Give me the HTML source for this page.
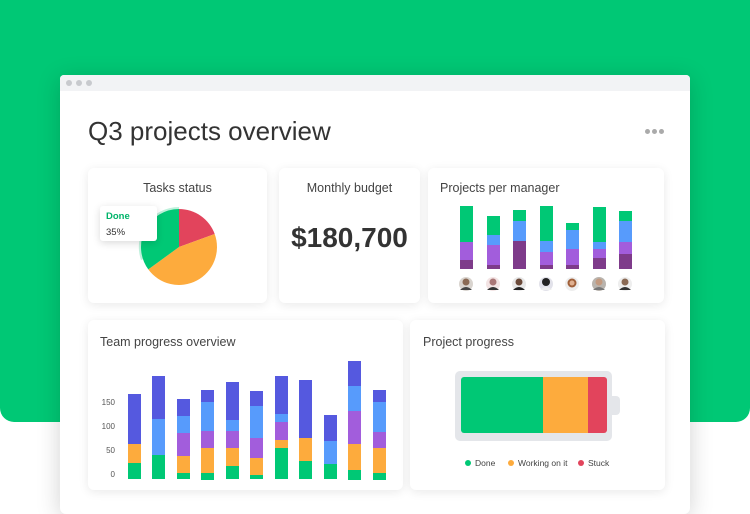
<!DOCTYPE html>
<html><head><meta charset="utf-8"><style>
*{margin:0;padding:0;box-sizing:border-box}
body{width:750px;height:514px;overflow:hidden;background:#fff;font-family:"Liberation Sans",sans-serif;position:relative}
.abs{position:absolute}
.green-bg{left:0;top:0;width:750px;height:422px;background:#00c875;border-radius:0 0 14px 14px}
.win{left:60px;top:75px;width:630px;height:439px;background:#fff;border-radius:4px 4px 6px 6px;box-shadow:0 4px 24px rgba(0,0,0,.18)}
.bar{left:0;top:0;width:630px;height:16px;background:#f2f3f5;border-radius:4px 4px 0 0}
.dot{width:6px;height:6px;border-radius:50%;background:#c8cace;top:5px}
.card{background:#fff;border-radius:6px;box-shadow:0 2px 10px rgba(0,0,0,.09)}
.t{color:#444;font-size:12.5px}
.b{position:absolute;width:13px}
</style></head><body>
<div class="abs green-bg"></div>
<div class="abs win">
 <div class="abs bar"></div>
 <div class="abs dot" style="left:6px"></div><div class="abs dot" style="left:16px"></div><div class="abs dot" style="left:26px"></div>
</div>
<div class="abs" style="left:88px;top:116px;font-size:26px;color:#333">Q3 projects overview</div>
<div class="abs" style="left:645px;top:129px;width:20px;height:5px">
 <span class="abs" style="left:0;width:5px;height:5px;border-radius:50%;background:#aaa"></span>
 <span class="abs" style="left:7px;width:5px;height:5px;border-radius:50%;background:#aaa"></span>
 <span class="abs" style="left:14px;width:5px;height:5px;border-radius:50%;background:#aaa"></span>
</div>

<!-- Tasks status -->
<div class="abs card" style="left:88px;top:168px;width:179px;height:135px"></div>
<div class="abs t" style="left:88px;top:181px;width:179px;text-align:center">Tasks status</div>
<svg class="abs" style="left:130px;top:200px" width="100" height="100" viewBox="0 0 100 100">
 <path d="M49 47 L49 7 A40 40 0 0 0 11 60 Z" fill="#00c875" opacity=".25"/>
 <path d="M49 47 L49 9 A38 38 0 0 1 84.7 34 Z" fill="#e2445c"/>
 <path d="M49 47 L84.7 34 A38 38 0 0 1 18.3 69.4 Z" fill="#fdab3d"/>
 <path d="M49 47 L18.3 69.4 A38 38 0 0 1 49 9 Z" fill="#00c875"/>
</svg>
<div class="abs card" style="left:100px;top:206px;width:57px;height:35px;border-radius:3px;box-shadow:0 2px 8px rgba(0,0,0,.15)">
 <div class="abs" style="left:6px;top:5px;font-size:9.5px;color:#00b46a;font-weight:bold">Done</div>
 <div class="abs" style="left:6px;top:21px;font-size:9.5px;color:#333">35%</div>
</div>

<!-- Monthly budget -->
<div class="abs card" style="left:279px;top:168px;width:141px;height:135px"></div>
<div class="abs t" style="left:279px;top:181px;width:141px;text-align:center">Monthly budget</div>
<div class="abs" style="left:279px;top:222px;width:141px;text-align:center;font-size:28px;font-weight:bold;color:#333">$180,700</div>

<!-- Projects per manager -->
<div class="abs card" style="left:428px;top:168px;width:236px;height:135px"></div>
<div class="abs t" style="left:440px;top:181px">Projects per manager</div>
<div class="abs" style="left:0;top:0">
 <div class="b" style="left:460px;top:206px;height:36px;background:#00c875"></div><div class="b" style="left:460px;top:242px;height:18px;background:#a25ddc"></div><div class="b" style="left:460px;top:260px;height:9px;background:#7e3b8a"></div>
 <div class="b" style="left:487px;top:216px;height:19px;background:#00c875"></div><div class="b" style="left:487px;top:235px;height:10px;background:#579bfc"></div><div class="b" style="left:487px;top:245px;height:20px;background:#a25ddc"></div><div class="b" style="left:487px;top:265px;height:4px;background:#7e3b8a"></div>
 <div class="b" style="left:513px;top:210px;height:11px;background:#00c875"></div><div class="b" style="left:513px;top:221px;height:20px;background:#579bfc"></div><div class="b" style="left:513px;top:241px;height:28px;background:#7e3b8a"></div>
 <div class="b" style="left:540px;top:206px;height:35px;background:#00c875"></div><div class="b" style="left:540px;top:241px;height:11px;background:#579bfc"></div><div class="b" style="left:540px;top:252px;height:13px;background:#a25ddc"></div><div class="b" style="left:540px;top:265px;height:4px;background:#7e3b8a"></div>
 <div class="b" style="left:566px;top:223px;height:7px;background:#00c875"></div><div class="b" style="left:566px;top:230px;height:19px;background:#579bfc"></div><div class="b" style="left:566px;top:249px;height:16px;background:#a25ddc"></div><div class="b" style="left:566px;top:265px;height:4px;background:#7e3b8a"></div>
 <div class="b" style="left:593px;top:207px;height:35px;background:#00c875"></div><div class="b" style="left:593px;top:242px;height:7px;background:#579bfc"></div><div class="b" style="left:593px;top:249px;height:9px;background:#a25ddc"></div><div class="b" style="left:593px;top:258px;height:11px;background:#7e3b8a"></div>
 <div class="b" style="left:619px;top:211px;height:10px;background:#00c875"></div><div class="b" style="left:619px;top:221px;height:21px;background:#579bfc"></div><div class="b" style="left:619px;top:242px;height:12px;background:#a25ddc"></div><div class="b" style="left:619px;top:254px;height:15px;background:#7e3b8a"></div>
</div>
<svg class="abs" style="left:455px;top:276px" width="180" height="18">
 <g>
  <circle cx="11" cy="8" r="7" fill="#d9d4cf"/><circle cx="11" cy="6" r="3.5" fill="#8a6a55"/><path d="M5 14 Q11 8 17 14" fill="#444"/>
  <circle cx="38" cy="8" r="7" fill="#f3e4e4"/><circle cx="38" cy="6" r="3.5" fill="#a77"/><path d="M32 14 Q38 8 44 14" fill="#333"/>
  <circle cx="64" cy="8" r="7" fill="#e8e8e8"/><circle cx="64" cy="6" r="3.5" fill="#6b4a3a"/><path d="M58 14 Q64 8 70 14" fill="#222"/>
  <circle cx="91" cy="8" r="7" fill="#e2e2ea"/><circle cx="91" cy="6" r="4" fill="#222"/><path d="M85 14 Q91 8 97 14" fill="#eee"/>
  <circle cx="117" cy="8" r="7" fill="#eee"/><circle cx="117" cy="7" r="4.5" fill="#a0603a"/><circle cx="117" cy="7" r="2.5" fill="#e0b090"/>
  <circle cx="144" cy="8" r="7" fill="#b9b4ae"/><circle cx="144" cy="6" r="3.5" fill="#c29a80"/><path d="M138 14 Q144 8 150 14" fill="#777"/>
  <circle cx="170" cy="8" r="7" fill="#eee"/><circle cx="170" cy="6" r="3.5" fill="#8a6a55"/><path d="M164 14 Q170 8 176 14" fill="#333"/>
 </g>
</svg>

<!-- Team progress overview -->
<div class="abs card" style="left:88px;top:320px;width:315px;height:170px"></div>
<div class="abs t" style="left:100px;top:335px">Team progress overview</div>
<div class="abs" style="left:98px;top:398px;width:17px;text-align:right;font-size:8px;color:#555">150</div>
<div class="abs" style="left:98px;top:422px;width:17px;text-align:right;font-size:8px;color:#555">100</div>
<div class="abs" style="left:98px;top:446px;width:17px;text-align:right;font-size:8px;color:#555">50</div>
<div class="abs" style="left:98px;top:470px;width:17px;text-align:right;font-size:8px;color:#555">0</div>
<svg class="abs" style="left:0;top:0" width="750" height="514">
<g>
<rect x="128" y="394" width="13" height="50" fill="#5559df"/><rect x="128" y="444" width="13" height="19" fill="#fdab3d"/><rect x="128" y="463" width="13" height="16" fill="#00c875"/>
<rect x="152" y="376" width="13" height="43" fill="#5559df"/><rect x="152" y="419" width="13" height="36" fill="#579bfc"/><rect x="152" y="455" width="13" height="24" fill="#00c875"/>
<rect x="177" y="399" width="13" height="17" fill="#5559df"/><rect x="177" y="416" width="13" height="17" fill="#579bfc"/><rect x="177" y="433" width="13" height="23" fill="#a25ddc"/><rect x="177" y="456" width="13" height="17" fill="#fdab3d"/><rect x="177" y="473" width="13" height="6" fill="#00c875"/>
<rect x="201" y="390" width="13" height="12" fill="#5559df"/><rect x="201" y="402" width="13" height="29" fill="#579bfc"/><rect x="201" y="431" width="13" height="17" fill="#a25ddc"/><rect x="201" y="448" width="13" height="25" fill="#fdab3d"/><rect x="201" y="473" width="13" height="7" fill="#00c875"/>
<rect x="226" y="382" width="13" height="38" fill="#5559df"/><rect x="226" y="420" width="13" height="11" fill="#579bfc"/><rect x="226" y="431" width="13" height="17" fill="#a25ddc"/><rect x="226" y="448" width="13" height="18" fill="#fdab3d"/><rect x="226" y="466" width="13" height="13" fill="#00c875"/>
<rect x="250" y="391" width="13" height="15" fill="#5559df"/><rect x="250" y="406" width="13" height="32" fill="#579bfc"/><rect x="250" y="438" width="13" height="20" fill="#a25ddc"/><rect x="250" y="458" width="13" height="17" fill="#fdab3d"/><rect x="250" y="475" width="13" height="4" fill="#00c875"/>
<rect x="275" y="376" width="13" height="38" fill="#5559df"/><rect x="275" y="414" width="13" height="8" fill="#579bfc"/><rect x="275" y="422" width="13" height="18" fill="#a25ddc"/><rect x="275" y="440" width="13" height="8" fill="#fdab3d"/><rect x="275" y="448" width="13" height="31" fill="#00c875"/>
<rect x="299" y="380" width="13" height="58" fill="#5559df"/><rect x="299" y="438" width="13" height="23" fill="#fdab3d"/><rect x="299" y="461" width="13" height="18" fill="#00c875"/>
<rect x="324" y="415" width="13" height="26" fill="#5559df"/><rect x="324" y="441" width="13" height="23" fill="#579bfc"/><rect x="324" y="464" width="13" height="15" fill="#00c875"/>
<rect x="348" y="361" width="13" height="25" fill="#5559df"/><rect x="348" y="386" width="13" height="25" fill="#579bfc"/><rect x="348" y="411" width="13" height="33" fill="#a25ddc"/><rect x="348" y="444" width="13" height="26" fill="#fdab3d"/><rect x="348" y="470" width="13" height="10" fill="#00c875"/>
<rect x="373" y="390" width="13" height="12" fill="#5559df"/><rect x="373" y="402" width="13" height="30" fill="#579bfc"/><rect x="373" y="432" width="13" height="16" fill="#a25ddc"/><rect x="373" y="448" width="13" height="25" fill="#fdab3d"/><rect x="373" y="473" width="13" height="7" fill="#00c875"/>
</g>
</svg>

<!-- Project progress -->
<div class="abs card" style="left:410px;top:320px;width:255px;height:170px"></div>
<div class="abs t" style="left:423px;top:335px">Project progress</div>
<div class="abs" style="left:612px;top:396px;width:8px;height:19px;background:#e4e6ea;border-radius:0 4px 4px 0"></div>
<div class="abs" style="left:455px;top:371px;width:157px;height:70px;background:#e4e6ea;border-radius:5px"></div>
<div class="abs" style="left:461px;top:377px;width:82px;height:56px;background:#00c875;border-radius:3px 0 0 3px"></div>
<div class="abs" style="left:543px;top:377px;width:45px;height:56px;background:#fdab3d"></div>
<div class="abs" style="left:588px;top:377px;width:19px;height:56px;background:#e2445c;border-radius:0 3px 3px 0"></div>
<div class="abs" style="left:465px;top:460px;width:6px;height:6px;border-radius:50%;background:#00c875"></div>
<div class="abs" style="left:475px;top:458px;font-size:8.5px;color:#444">Done</div>
<div class="abs" style="left:508px;top:460px;width:6px;height:6px;border-radius:50%;background:#fdab3d"></div>
<div class="abs" style="left:518px;top:458px;font-size:8.5px;color:#444">Working on it</div>
<div class="abs" style="left:578px;top:460px;width:6px;height:6px;border-radius:50%;background:#e2445c"></div>
<div class="abs" style="left:588px;top:458px;font-size:8.5px;color:#444">Stuck</div>
</body></html>
